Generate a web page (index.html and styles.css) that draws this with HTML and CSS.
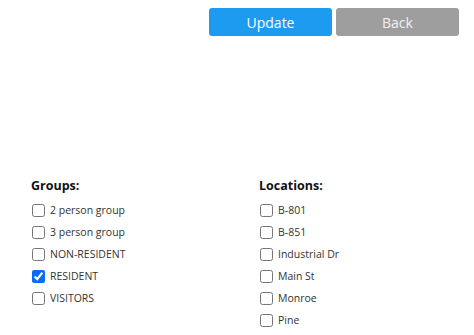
FILE: index.html
```html
<!DOCTYPE html>
<html>
<head>
<meta charset="utf-8">
<link rel="stylesheet" href="styles.css">
</head>
<body>
<div class="toolbar">
  <button class="btn btn-primary">Update</button>
  <button class="btn btn-secondary">Back</button>
</div>
<div class="filters">
  <div class="group">
    <div class="group-title">Groups:</div>
    <label class="option"><input type="checkbox"><span>2 person group</span></label>
    <label class="option"><input type="checkbox"><span>3 person group</span></label>
    <label class="option"><input type="checkbox"><span>NON-RESIDENT</span></label>
    <label class="option"><input type="checkbox" checked><span>RESIDENT</span></label>
    <label class="option"><input type="checkbox"><span>VISITORS</span></label>
  </div>
  <div class="group">
    <div class="group-title">Locations:</div>
    <label class="option"><input type="checkbox"><span>B-801</span></label>
    <label class="option"><input type="checkbox"><span>B-851</span></label>
    <label class="option"><input type="checkbox"><span>Industrial Dr</span></label>
    <label class="option"><input type="checkbox"><span>Main St</span></label>
    <label class="option"><input type="checkbox"><span>Monroe</span></label>
    <label class="option"><input type="checkbox"><span>Pine</span></label>
  </div>
</div>
</body>
</html>
```
FILE: styles.css
```css
html, body {
  margin: 0;
  padding: 0;
  background: #ffffff;
  font-family: "Open Sans", "Noto Sans", sans-serif;
  color: #222;
}
.toolbar {
  display: flex;
  justify-content: flex-end;
  gap: 4px;
  padding: 8px 15px 0 0;
}
.btn {
  width: 123px;
  height: 28px;
  border: none;
  border-radius: 3px;
  font-family: "Open Sans", "Noto Sans", sans-serif;
  font-size: 14px;
  color: #fff;
  padding: 0;
}
.btn-primary {
  background: #1d9bf0;
}
.btn-secondary {
  background: #9e9e9e;
  color: #f2f2f2;
}
.filters {
  display: grid;
  grid-template-columns: 228px 200px;
  padding: 141px 0 0 31px;
}
.group {
  display: flex;
  flex-direction: column;
}
.group-title {
  font-weight: bold;
  font-size: 12.5px;
  line-height: 18px;
  margin-bottom: 4px;
  color: #111;
}
.option {
  display: flex;
  align-items: center;
  height: 22px;
  font-size: 10.5px;
  color: #333;
}
.option input {
  width: 13px;
  height: 13px;
  margin: 0 5px 0 1px;
  accent-color: #0a6cf5;
}
```
